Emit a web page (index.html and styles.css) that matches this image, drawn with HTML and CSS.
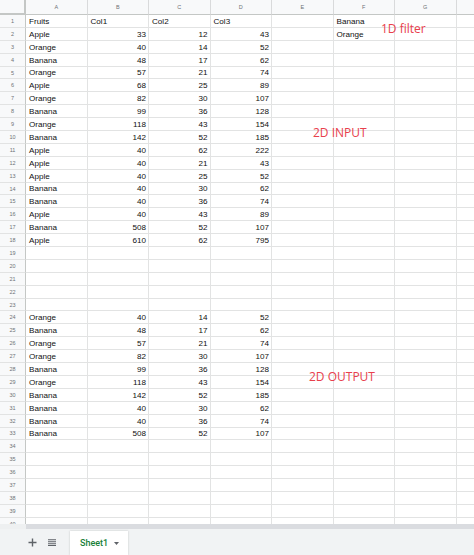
FILE: index.html
```html
<!DOCTYPE html>
<html>
<head>
<meta charset="utf-8">
<link rel="stylesheet" href="styles.css">
</head>
<body>
<div class="app">
  <div class="viewport">
    <div class="sheet">
      <div class="corner"></div><div class="ch">A</div><div class="ch">B</div><div class="ch">C</div><div class="ch">D</div><div class="ch">E</div><div class="ch">F</div><div class="ch">G</div><div class="ch"></div>
      <div class="rh">1</div><div class="c">Fruits</div><div class="c">Col1</div><div class="c">Col2</div><div class="c">Col3</div><div class="c"></div><div class="c">Banana</div><div class="c"></div><div class="c"></div>
      <div class="rh">2</div><div class="c">Apple</div><div class="c n">33</div><div class="c n">12</div><div class="c n">43</div><div class="c"></div><div class="c">Orange</div><div class="c"></div><div class="c"></div>
      <div class="rh">3</div><div class="c">Orange</div><div class="c n">40</div><div class="c n">14</div><div class="c n">52</div><div class="c"></div><div class="c"></div><div class="c"></div><div class="c"></div>
      <div class="rh">4</div><div class="c">Banana</div><div class="c n">48</div><div class="c n">17</div><div class="c n">62</div><div class="c"></div><div class="c"></div><div class="c"></div><div class="c"></div>
      <div class="rh">5</div><div class="c">Orange</div><div class="c n">57</div><div class="c n">21</div><div class="c n">74</div><div class="c"></div><div class="c"></div><div class="c"></div><div class="c"></div>
      <div class="rh">6</div><div class="c">Apple</div><div class="c n">68</div><div class="c n">25</div><div class="c n">89</div><div class="c"></div><div class="c"></div><div class="c"></div><div class="c"></div>
      <div class="rh">7</div><div class="c">Orange</div><div class="c n">82</div><div class="c n">30</div><div class="c n">107</div><div class="c"></div><div class="c"></div><div class="c"></div><div class="c"></div>
      <div class="rh">8</div><div class="c">Banana</div><div class="c n">99</div><div class="c n">36</div><div class="c n">128</div><div class="c"></div><div class="c"></div><div class="c"></div><div class="c"></div>
      <div class="rh">9</div><div class="c">Orange</div><div class="c n">118</div><div class="c n">43</div><div class="c n">154</div><div class="c"></div><div class="c"></div><div class="c"></div><div class="c"></div>
      <div class="rh">10</div><div class="c">Banana</div><div class="c n">142</div><div class="c n">52</div><div class="c n">185</div><div class="c"></div><div class="c"></div><div class="c"></div><div class="c"></div>
      <div class="rh">11</div><div class="c">Apple</div><div class="c n">40</div><div class="c n">62</div><div class="c n">222</div><div class="c"></div><div class="c"></div><div class="c"></div><div class="c"></div>
      <div class="rh">12</div><div class="c">Apple</div><div class="c n">40</div><div class="c n">21</div><div class="c n">43</div><div class="c"></div><div class="c"></div><div class="c"></div><div class="c"></div>
      <div class="rh">13</div><div class="c">Apple</div><div class="c n">40</div><div class="c n">25</div><div class="c n">52</div><div class="c"></div><div class="c"></div><div class="c"></div><div class="c"></div>
      <div class="rh">14</div><div class="c">Banana</div><div class="c n">40</div><div class="c n">30</div><div class="c n">62</div><div class="c"></div><div class="c"></div><div class="c"></div><div class="c"></div>
      <div class="rh">15</div><div class="c">Banana</div><div class="c n">40</div><div class="c n">36</div><div class="c n">74</div><div class="c"></div><div class="c"></div><div class="c"></div><div class="c"></div>
      <div class="rh">16</div><div class="c">Apple</div><div class="c n">40</div><div class="c n">43</div><div class="c n">89</div><div class="c"></div><div class="c"></div><div class="c"></div><div class="c"></div>
      <div class="rh">17</div><div class="c">Banana</div><div class="c n">508</div><div class="c n">52</div><div class="c n">107</div><div class="c"></div><div class="c"></div><div class="c"></div><div class="c"></div>
      <div class="rh">18</div><div class="c">Apple</div><div class="c n">610</div><div class="c n">62</div><div class="c n">795</div><div class="c"></div><div class="c"></div><div class="c"></div><div class="c"></div>
      <div class="rh">19</div><div class="c"></div><div class="c"></div><div class="c"></div><div class="c"></div><div class="c"></div><div class="c"></div><div class="c"></div><div class="c"></div>
      <div class="rh">20</div><div class="c"></div><div class="c"></div><div class="c"></div><div class="c"></div><div class="c"></div><div class="c"></div><div class="c"></div><div class="c"></div>
      <div class="rh">21</div><div class="c"></div><div class="c"></div><div class="c"></div><div class="c"></div><div class="c"></div><div class="c"></div><div class="c"></div><div class="c"></div>
      <div class="rh">22</div><div class="c"></div><div class="c"></div><div class="c"></div><div class="c"></div><div class="c"></div><div class="c"></div><div class="c"></div><div class="c"></div>
      <div class="rh">23</div><div class="c"></div><div class="c"></div><div class="c"></div><div class="c"></div><div class="c"></div><div class="c"></div><div class="c"></div><div class="c"></div>
      <div class="rh">24</div><div class="c">Orange</div><div class="c n">40</div><div class="c n">14</div><div class="c n">52</div><div class="c"></div><div class="c"></div><div class="c"></div><div class="c"></div>
      <div class="rh">25</div><div class="c">Banana</div><div class="c n">48</div><div class="c n">17</div><div class="c n">62</div><div class="c"></div><div class="c"></div><div class="c"></div><div class="c"></div>
      <div class="rh">26</div><div class="c">Orange</div><div class="c n">57</div><div class="c n">21</div><div class="c n">74</div><div class="c"></div><div class="c"></div><div class="c"></div><div class="c"></div>
      <div class="rh">27</div><div class="c">Orange</div><div class="c n">82</div><div class="c n">30</div><div class="c n">107</div><div class="c"></div><div class="c"></div><div class="c"></div><div class="c"></div>
      <div class="rh">28</div><div class="c">Banana</div><div class="c n">99</div><div class="c n">36</div><div class="c n">128</div><div class="c"></div><div class="c"></div><div class="c"></div><div class="c"></div>
      <div class="rh">29</div><div class="c">Orange</div><div class="c n">118</div><div class="c n">43</div><div class="c n">154</div><div class="c"></div><div class="c"></div><div class="c"></div><div class="c"></div>
      <div class="rh">30</div><div class="c">Banana</div><div class="c n">142</div><div class="c n">52</div><div class="c n">185</div><div class="c"></div><div class="c"></div><div class="c"></div><div class="c"></div>
      <div class="rh">31</div><div class="c">Banana</div><div class="c n">40</div><div class="c n">30</div><div class="c n">62</div><div class="c"></div><div class="c"></div><div class="c"></div><div class="c"></div>
      <div class="rh">32</div><div class="c">Banana</div><div class="c n">40</div><div class="c n">36</div><div class="c n">74</div><div class="c"></div><div class="c"></div><div class="c"></div><div class="c"></div>
      <div class="rh">33</div><div class="c">Banana</div><div class="c n">508</div><div class="c n">52</div><div class="c n">107</div><div class="c"></div><div class="c"></div><div class="c"></div><div class="c"></div>
      <div class="rh">34</div><div class="c"></div><div class="c"></div><div class="c"></div><div class="c"></div><div class="c"></div><div class="c"></div><div class="c"></div><div class="c"></div>
      <div class="rh">35</div><div class="c"></div><div class="c"></div><div class="c"></div><div class="c"></div><div class="c"></div><div class="c"></div><div class="c"></div><div class="c"></div>
      <div class="rh">36</div><div class="c"></div><div class="c"></div><div class="c"></div><div class="c"></div><div class="c"></div><div class="c"></div><div class="c"></div><div class="c"></div>
      <div class="rh">37</div><div class="c"></div><div class="c"></div><div class="c"></div><div class="c"></div><div class="c"></div><div class="c"></div><div class="c"></div><div class="c"></div>
      <div class="rh">38</div><div class="c"></div><div class="c"></div><div class="c"></div><div class="c"></div><div class="c"></div><div class="c"></div><div class="c"></div><div class="c"></div>
      <div class="rh">39</div><div class="c"></div><div class="c"></div><div class="c"></div><div class="c"></div><div class="c"></div><div class="c"></div><div class="c"></div><div class="c"></div>
      <div class="rh">40</div><div class="c"></div><div class="c"></div><div class="c"></div><div class="c"></div><div class="c"></div><div class="c"></div><div class="c"></div><div class="c"></div>
    </div>
    <div class="note note-filter">1D filter</div>
    <div class="note note-input">2D INPUT</div>
    <div class="note note-output">2D OUTPUT</div>
  </div>
  <div class="hscroll"><div class="hscroll-pad"></div><div class="hscroll-track"></div></div>
  <div class="tabbar">
    <div class="tab-tools">
      <svg class="icon" width="9" height="9" viewBox="0 0 9 9"><path d="M4.5 0.5v8M0.5 4.5h8" stroke="#5f6368" stroke-width="1.4" fill="none"/></svg>
      <svg class="icon" width="8" height="7" viewBox="0 0 8 7"><path d="M0 0.75h8M0 2.75h8M0 4.75h8M0 6.5h8" stroke="#5f6368" stroke-width="1.1" fill="none"/></svg>
    </div>
    <div class="tab">
      <span class="tab-name">Sheet1</span>
      <svg width="5" height="3" viewBox="0 0 5 3"><path d="M0 0h5L2.5 3z" fill="#5f6368"/></svg>
    </div>
  </div>
</div>
</body>
</html>
```

FILE: styles.css
```css
* { box-sizing: border-box; }
html, body { margin: 0; padding: 0; background: #fff; }
body { width: 474px; height: 555px; overflow: hidden; font-family: "Liberation Sans", Arial, sans-serif; }

.app { display: flex; flex-direction: column; height: 555px; }

.viewport {
  position: relative;
  height: 524px;
  overflow: hidden;
  flex: none;
}

.sheet {
  display: grid;
  grid-template-columns: 26px repeat(8, 61.5px);
  grid-template-rows: 15px repeat(40, 12.9px);
  width: 518px;
}

.corner {
  background: #f8f9fa;
  border-right: 2px solid #c4c7c5;
  border-bottom: 2px solid #c4c7c5;
}

.ch {
  background: #f8f9fa;
  border-right: 1px solid #d9dadb;
  border-bottom: 1px solid #c4c7c5;
  color: #6f7275;
  font-size: 5.5px;
  display: flex;
  align-items: center;
  justify-content: center;
}

.rh {
  background: #f8f9fa;
  border-right: 1px solid #c4c7c5;
  border-bottom: 1px solid #e2e3e3;
  color: #6f7275;
  font-size: 5.5px;
  display: flex;
  align-items: center;
  justify-content: center;
}

.c {
  border-right: 1px solid #e2e3e3;
  border-bottom: 1px solid #e2e3e3;
  font-size: 8.1px;
  line-height: 10px;
  color: #111;
  padding: 0 2px 0 3px;
  display: flex;
  align-items: flex-end;
  white-space: nowrap;
  overflow: hidden;
}
.c.n { justify-content: flex-end; padding-right: 2px; }

.note {
  position: absolute;
  font-family: "Open Sans", sans-serif;
  font-size: 12px;
  line-height: 14px;
  color: #e8404c;
  white-space: nowrap;
}
.note-filter { left: 381px; top: 22px; }
.note-input { left: 313px; top: 126px; }
.note-output { left: 309px; top: 370px; }

.hscroll { display: flex; height: 5px; flex: none; }
.hscroll-pad { width: 26px; background: #eef0f1; }
.hscroll-track { flex: 1; background: #dadce0; }

.tabbar {
  flex: 1;
  background: #f1f3f4;
  display: flex;
  align-items: stretch;
  padding-left: 28px;
}
.tab-tools {
  display: flex;
  align-items: center;
  gap: 11px;
  width: 42px;
  padding-top: 1px;
}
.icon { display: block; }
.tab {
  margin-top: 2px;
  width: 58px;
  background: #fff;
  box-shadow: 0 0 2px rgba(60,64,67,0.25);
  display: flex;
  align-items: center;
  gap: 6px;
  padding-left: 10px;
}
.tab-name {
  font-family: Roboto, sans-serif;
  font-weight: 500;
  font-size: 9px;
  color: #188038;
}
```
